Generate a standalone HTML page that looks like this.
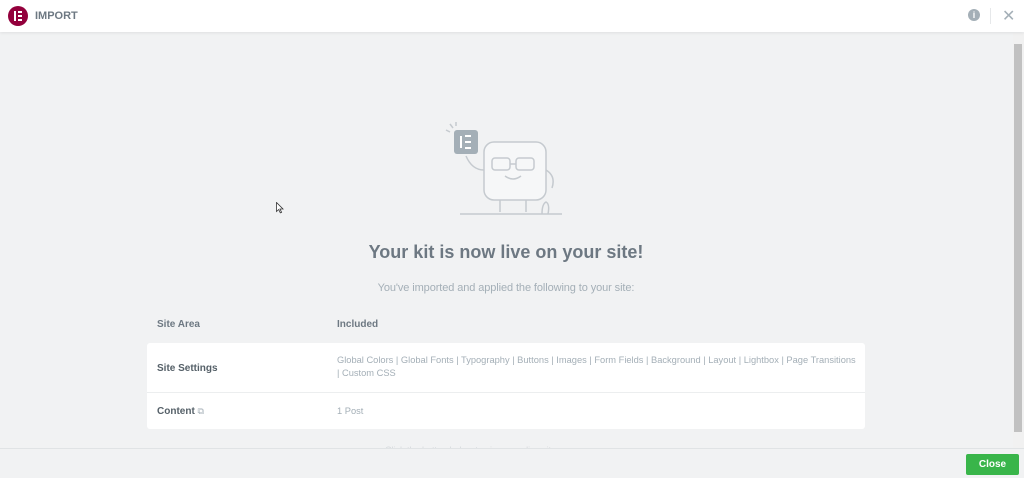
<!DOCTYPE html>
<html><head><meta charset="utf-8"><style>
*{box-sizing:border-box;margin:0;padding:0}
body{width:1024px;height:478px;overflow:hidden;background:#f1f2f3;font-family:"Liberation Sans",Arial,sans-serif;position:relative}
.hdr{position:absolute;left:0;top:0;width:1024px;height:32px;background:#fff;box-shadow:0 1px 3px rgba(0,0,0,.08);z-index:2}
.logo{position:absolute;left:8px;top:6px;width:20px;height:20px;border-radius:50%;background:#93003c}
.logo i{position:absolute;background:#fff}
.ttl{position:absolute;left:35px;top:10px;font-size:11px;font-weight:bold;color:#6d7882}
.info{position:absolute;left:968px;top:9px;width:12px;height:12px;border-radius:50%;background:#a4afb7;color:#fff;font-size:9px;font-weight:bold;text-align:center;line-height:12px}
.sep{position:absolute;left:990px;top:8px;width:1px;height:16px;background:#e6e8ea}
.x{position:absolute;left:1002px;top:6px;font-size:16px;color:#a4afb7}
.sb{position:absolute;left:1013px;top:33px;width:11px;height:415px;background:#f1f1f1}
.th{position:absolute;left:1014px;top:44px;width:8px;height:388px;background:#c1c1c1}
h1{position:absolute;top:242px;left:0;width:1012px;text-align:center;font-size:18px;color:#6d7882;font-weight:bold}
.sub{position:absolute;top:282px;left:0;width:1012px;text-align:center;font-size:11px;color:#a4afb7;letter-spacing:-0.1px}
.th1{position:absolute;top:319px;font-size:10px;font-weight:bold;color:#6d7882}
.card{position:absolute;left:147px;top:343px;width:718px;height:86px;background:#fff;border-radius:3px}
.row2{position:absolute;left:0;top:49px;width:718px;height:1px;background:#eceeef}
.lab{position:absolute;left:10px;font-size:10px;font-weight:bold;color:#556068}
.val{position:absolute;left:190px;font-size:9.3px;color:#a4afb7;line-height:13px;width:600px;white-space:nowrap}
.ft{position:absolute;left:0;top:448px;width:1024px;height:30px;background:#f1f2f3;border-top:1px solid #e0e3e5}
.btn{position:absolute;left:966px;top:454px;width:53px;height:21px;background:#39b54a;border-radius:2px;color:#fff;font-size:10px;font-weight:bold;text-align:center;line-height:21px}
</style></head><body>
<div class="hdr">
<div class="logo"><i style="left:6px;top:5px;width:2px;height:10px"></i><i style="left:10px;top:5px;width:4px;height:2px"></i><i style="left:10px;top:9px;width:4px;height:2px"></i><i style="left:10px;top:13px;width:4px;height:2px"></i></div>
<div class="ttl">IMPORT</div>
<div class="info">i</div><div class="sep"></div><div class="x">✕</div>
</div>
<svg style="position:absolute;left:440px;top:120px" width="130" height="100" viewBox="0 0 130 100" fill="none" stroke="#c5cacf" stroke-width="1.5">
<rect x="14" y="10" width="24" height="24" rx="3" fill="#a4afb7" stroke="none"/>
<path d="M21 16v12M25 16h6M25 22h6M25 28h6" stroke="#fff" stroke-width="2"/>
<path d="M10 4l3 4M16 2v4M6 10l4 2"/>
<rect x="44" y="22" width="62" height="58" rx="10" fill="#f6f7f8"/>
<rect x="52" y="38" width="18" height="12" rx="3"/><rect x="76" y="38" width="18" height="12" rx="3"/>
<path d="M70 44h6M65 56q8 6 16 0"/>
<path d="M44 50q-12 0-18-14M106 50q10 6 6 18"/>
<path d="M60 80v12M86 80v12M20 94h102"/>
<path d="M102 94q0-10 4-12q4 2 2 12"/>
</svg>
<svg style="position:absolute;left:276px;top:202px" width="8" height="12" viewBox="0 0 8 12"><path d="M0.5 0.5v9l2.2-2 1.6 3.4 1.3-.6-1.6-3.3h3z" fill="#fff" stroke="#333" stroke-width="0.8"/></svg>
<h1>Your kit is now live on your site!</h1>
<div class="sub">You've imported and applied the following to your site:</div>
<div class="th1" style="left:157px">Site Area</div>
<div class="th1" style="left:337px">Included</div>
<div class="card">
<div class="lab" style="top:20px">Site Settings</div>
<div class="val" style="top:11px">Global Colors | Global Fonts | Typography | Buttons | Images | Form Fields | Background | Layout | Lightbox | Page Transitions<br>| Custom CSS</div>
<div class="row2"></div>
<div class="lab" style="top:63px">Content <span style="font-weight:normal;color:#a4afb7;font-size:9px">⧉</span></div>
<div class="val" style="top:62px">1 Post</div>
</div>
<div style="position:absolute;top:445px;left:385px;font-size:9px;color:#d5d9dc">Click the button below to view your live site</div>
<div class="sb"></div><div class="th"></div>
<div class="ft"></div>
<div class="btn">Close</div>
</body></html>
